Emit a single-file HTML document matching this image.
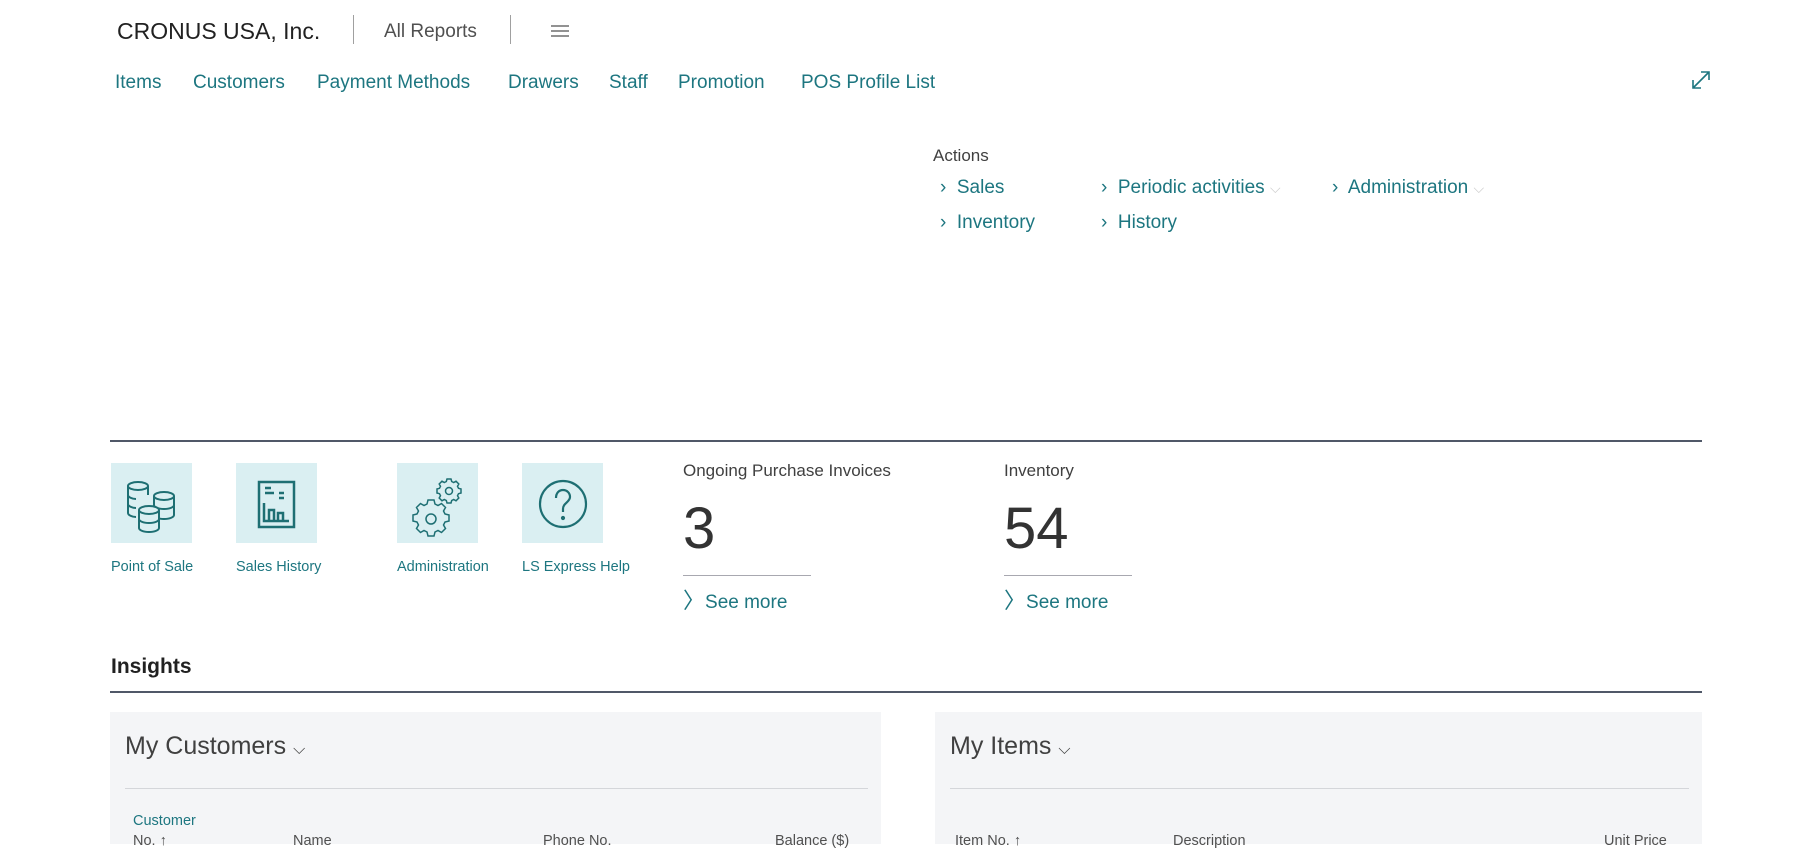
<!DOCTYPE html>
<html><head><meta charset="utf-8"><style>
body{margin:0;width:1805px;height:844px;overflow:hidden;background:#fff;font-family:"Liberation Sans",sans-serif;position:relative}
.a{position:absolute;white-space:nowrap;line-height:1}
.t{color:#1d7680}
.nav{font-size:19px;top:73px}
.act{font-size:19px}
.tile{position:absolute;top:463px;width:81px;height:80px;background:#daeff2}
.lbl{position:absolute;top:559px;font-size:14.5px;color:#1d7680;white-space:nowrap}
.hd{font-size:14.5px;color:#505050}
</style></head><body>
<div class="a" style="left:117px;top:20px;font-size:23px;color:#212121">CRONUS USA, Inc.</div>
<div class="a" style="left:353px;top:15px;width:1px;height:29px;background:#a0a0a0"></div>
<div class="a" style="left:384px;top:22px;font-size:19px;color:#505050">All Reports</div>
<div class="a" style="left:510px;top:15px;width:1px;height:29px;background:#a0a0a0"></div>
<svg class="a" style="left:550px;top:24px" width="20" height="14"><path d="M1 2h18M1 7h18M1 12h18" stroke="#505050" stroke-width="1.3"/></svg>
<div class="a nav t" style="left:115px">Items</div>
<div class="a nav t" style="left:193px">Customers</div>
<div class="a nav t" style="left:317px">Payment Methods</div>
<div class="a nav t" style="left:508px">Drawers</div>
<div class="a nav t" style="left:609px">Staff</div>
<div class="a nav t" style="left:678px">Promotion</div>
<div class="a nav t" style="left:801px">POS Profile List</div>
<svg class="a" style="left:1690px;top:69px" width="22" height="22"><path d="M3 19L19 3M11 3h8v8M3 11v8h8" stroke="#1d7680" stroke-width="1.6" fill="none"/></svg>

<div class="a" style="left:933px;top:147px;font-size:17px;color:#404040">Actions</div>
<div class="a act t" style="left:940px;top:178px">›&nbsp; Sales</div>
<div class="a act t" style="left:1101px;top:178px">›&nbsp; Periodic activities <span style="color:#ccc;font-size:14px">⌵</span></div>
<div class="a act t" style="left:1332px;top:178px">›&nbsp; Administration <span style="color:#ccc;font-size:14px">⌵</span></div>
<div class="a act t" style="left:940px;top:213px">›&nbsp; Inventory</div>
<div class="a act t" style="left:1101px;top:213px">›&nbsp; History</div>

<div class="a" style="left:110px;top:440px;width:1592px;height:2px;background:#505868"></div>

<div class="tile" style="left:111px"><svg width="81" height="80" fill="none" stroke="#1e6f73" stroke-width="2"><ellipse cx="27" cy="23" rx="10" ry="4"/><path d="M17 23v27c0 2 4 4 8 4M17 32c0 2 4 4 8 4M17 41c0 2 4 4 8 4M37 23v9"/><ellipse cx="53" cy="33" rx="10" ry="4"/><path d="M43 33v19c0 2 4 4 10 4s10-2 10-4V33M43 42c0 2 4 4 10 4s10-2 10-4"/><path d="M28 47v18c0 2 4 4 10 4s10-2 10-4V47z" fill="#daeff2" stroke="none"/><ellipse cx="38" cy="47" rx="10" ry="4" fill="#daeff2"/><path d="M28 47v18c0 2 4 4 10 4s10-2 10-4V47M28 56c0 2 4 4 10 4s10-2 10-4"/></svg></div>
<div class="tile" style="left:236px"><svg width="81" height="80" fill="none" stroke="#1e6f73" stroke-width="2.5"><rect x="23" y="19" width="35" height="45"/><path d="M29 25h6M29 30h9M43 30h5M43 35h5M28 40v18h25M33 58V47h5v11M42 58v-8h5v8"/></svg></div>
<div class="tile" style="left:397px"><svg width="81" height="80" fill="none" stroke="#1e6f73" stroke-width="1.5">
<path d="M31 37h6l1 4 3 1.5 3.5-2 4 4-2 3.5 1.5 3 4 1v6l-4 1-1.5 3 2 3.5-4 4-3.5-2-3 1.5-1 4h-6l-1-4-3-1.5-3.5 2-4-4 2-3.5-1.5-3-4-1v-6l4-1 1.5-3-2-3.5 4-4 3.5 2 3-1.5z"/><circle cx="34" cy="56" r="5"/>
<path d="M50 16h4l.7 2.5 2 1 2.3-1.3 2.8 2.8-1.3 2.3 1 2 2.5.7v4l-2.5.7-1 2 1.3 2.3-2.8 2.8-2.3-1.3-2 1-.7 2.5h-4l-.7-2.5-2-1-2.3 1.3-2.8-2.8 1.3-2.3-1-2-2.5-.7v-4l2.5-.7 1-2-1.3-2.3 2.8-2.8 2.3 1.3 2-1z"/><circle cx="52" cy="28" r="3.5"/></svg></div>
<div class="tile" style="left:522px"><svg width="81" height="80" fill="none" stroke="#1e6f73" stroke-width="2.2"><circle cx="41" cy="41" r="23"/><path d="M34 35c0-5 3-8 7-8s7 3 7 7c0 5-7 6-7 12v3"/><circle cx="41" cy="55" r="1" fill="#1e6f73"/></svg></div>
<div class="lbl" style="left:111px">Point of Sale</div>
<div class="lbl" style="left:236px">Sales History</div>
<div class="lbl" style="left:397px">Administration</div>
<div class="lbl" style="left:522px">LS Express Help</div>

<div class="a" style="left:683px;top:462px;font-size:17px;color:#404040">Ongoing Purchase Invoices</div>
<div class="a" style="left:683px;top:500px;font-size:58px;font-weight:300;color:#333">3</div>
<div class="a" style="left:683px;top:575px;width:128px;height:1px;background:#a8a8b0"></div>
<div class="a t" style="left:683px;top:590px;font-size:19px"><span style="font-size:22px">〉</span>See more</div>
<div class="a" style="left:1004px;top:462px;font-size:17px;color:#404040">Inventory</div>
<div class="a" style="left:1004px;top:500px;font-size:58px;font-weight:300;color:#333">54</div>
<div class="a" style="left:1004px;top:575px;width:128px;height:1px;background:#a8a8b0"></div>
<div class="a t" style="left:1004px;top:590px;font-size:19px"><span style="font-size:22px">〉</span>See more</div>

<div class="a" style="left:111px;top:656px;font-size:21px;font-weight:bold;color:#212121">Insights</div>
<div class="a" style="left:110px;top:691px;width:1592px;height:2px;background:#505868"></div>

<div class="a" style="left:110px;top:712px;width:771px;height:132px;background:#f4f5f7"></div>
<div class="a" style="left:935px;top:712px;width:767px;height:132px;background:#f4f5f7"></div>
<div class="a" style="left:125px;top:734px;font-size:25px;color:#404040">My Customers <span style="font-size:16px">⌵</span></div>
<div class="a" style="left:125px;top:788px;width:743px;height:1px;background:#d4d6da"></div>
<div class="a" style="left:950px;top:734px;font-size:25px;color:#404040">My Items <span style="font-size:16px">⌵</span></div>
<div class="a" style="left:950px;top:788px;width:739px;height:1px;background:#d4d6da"></div>
<div class="a hd" style="left:133px;top:814px;color:#1d7680">Customer</div>
<div class="a hd" style="left:133px;top:834px">No. ↑</div>
<div class="a hd" style="left:293px;top:834px">Name</div>
<div class="a hd" style="left:543px;top:834px">Phone No.</div>
<div class="a hd" style="left:775px;top:834px">Balance ($)</div>
<div class="a hd" style="left:955px;top:834px">Item No. ↑</div>
<div class="a hd" style="left:1173px;top:834px">Description</div>
<div class="a hd" style="left:1604px;top:834px">Unit Price</div>
</body></html>
